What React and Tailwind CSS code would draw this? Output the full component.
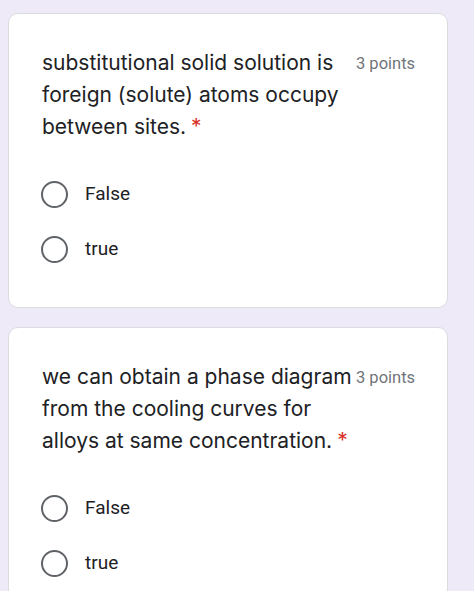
import React from "react";

function Radio({ label }) {
  return (
    <div className="flex h-[55px] items-center">
      <div className="ml-[-1px] h-[27px] w-[27px] rounded-full border-[2.5px] border-[#5f6368]" />
      <span className="ml-[17px] text-[19px] text-[#202124]" style={{ fontFamily: "Roboto, sans-serif" }}>
        {label}
      </span>
    </div>
  );
}

function Card({ lines }) {
  return (
    <div className="w-[440px] rounded-[10px] border border-[#dadce0] bg-white pl-[33px] pt-[33px] pb-[30px]">
      <div className="flex items-start">
        <div
          className="w-[314px] shrink-0 whitespace-nowrap text-[21px] font-normal leading-[32px] text-[#202124]"
          style={{ fontFamily: "Inter, 'Open Sans', sans-serif" }}
        >
          {lines.map((l, i) => (
            <div key={i}>
              {l}
              {i === lines.length - 1 && <span className="ml-[5px] text-[#d93025]">*</span>}
            </div>
          ))}
        </div>
        <div
          className="pt-[5px] text-[16.5px] leading-[24px] text-[#70757a] whitespace-nowrap"
          style={{ fontFamily: "Roboto, sans-serif" }}
        >
          3 points
        </div>
      </div>
      <div className="mt-[24px]">
        <Radio label="False" />
        <Radio label="true" />
      </div>
    </div>
  );
}

export default function App() {
  return (
    <div className="h-[591px] w-[474px] overflow-hidden bg-[#eeeaf8] pl-[8px] pt-[13px]">
      <Card lines={["substitutional solid solution is", "foreign (solute) atoms occupy", "between sites."]} />
      <div className="h-[19px]" />
      <Card lines={["we can obtain a phase diagram", "from the cooling curves for", "alloys at same concentration."]} />
    </div>
  );
}
